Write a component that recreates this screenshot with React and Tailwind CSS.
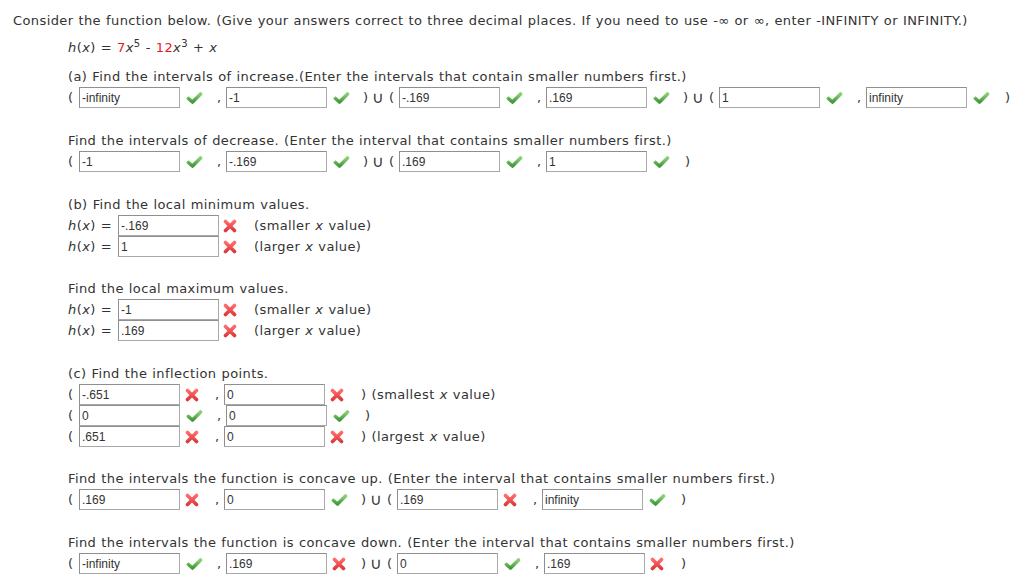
import React from "react";

const font = { fontFamily: '"DejaVu Sans", Verdana, sans-serif' };

function Box({ v, cls = "" }) {
    return (
        <div
            className={`w-[101px] h-[21px] shrink-0 border border-[#a9a9a9] border-t-[#8f8f8f] border-l-[#8f8f8f] bg-white pl-[2px] flex items-center text-[12px] text-[#333] tracking-normal [word-spacing:0px] ${cls}`}
            style={{ fontFamily: '"Liberation Sans", Arial, sans-serif' }}
        >
            {v}
        </div>
    );
}

function Check() {
    return (
        <svg width="17" height="14" viewBox="0 0 17 14">
            <defs>
                <linearGradient id="gck" x1="0" y1="0" x2="0" y2="1">
                    <stop offset="0" stopColor="#8ed174" />
                    <stop offset="1" stopColor="#3f9a3a" />
                </linearGradient>
            </defs>
            <path d="M2.5 7.5 L6.5 11 L14.5 3" fill="none" stroke="url(#gck)" strokeWidth="3.6" strokeLinecap="round" strokeLinejoin="round" />
        </svg>
    );
}

function Cross() {
    return (
        <svg width="14" height="14" viewBox="0 0 14 14">
            <defs>
                <linearGradient id="gx" x1="0" y1="0" x2="0" y2="1">
                    <stop offset="0" stopColor="#ff6b6b" />
                    <stop offset="1" stopColor="#e0393c" />
                </linearGradient>
            </defs>
            <path d="M2.5 2.5 L11.5 11.5 M11.5 2.5 L2.5 11.5" fill="none" stroke="url(#gx)" strokeWidth="3.6" strokeLinecap="round" />
        </svg>
    );
}

// mark after an input: ok = green check, otherwise red cross
function Mark({ ok }) {
    return ok ? (
        <div className="w-[26px] shrink-0 pl-[6px] flex items-center"><Check /></div>
    ) : (
        <div className="w-[24px] shrink-0 pl-[5px] flex items-center"><Cross /></div>
    );
}

const Comma = () => <div className="w-[20px] shrink-0 pl-[11px]">,</div>;
const Union = () => (
    <div className="w-[46px] shrink-0 pl-[10px] flex items-center">
        <span>)</span>
        <span className="ml-[4px] text-[16px] leading-none font-light">∪</span>
        <span className="ml-[4px]">(</span>
    </div>
);
const Open = () => <div className="w-[11px] shrink-0">(</div>;
const Close = ({ children }) => <div className="pl-[12px] whitespace-pre">{children || ")"}</div>;

function Hx() {
    return (
        <span>
            <i>h</i>(<i>x</i>) =
        </span>
    );
}

function Label({ children, cls = "" }) {
    return <div className={`h-[21px] leading-[21px] whitespace-nowrap ${cls}`}>{children}</div>;
}

function Row({ children, cls = "" }) {
    return <div className={`h-[21px] flex items-center ${cls}`}>{children}</div>;
}

// interval pairs: [[a, okA], [b, okB]] ...
function Intervals({ items }) {
    return (
        <Row>
            <Open />
            {items.map((pair, i) => (
                <React.Fragment key={i}>
                    {i > 0 && <Union />}
                    <Box v={pair[0][0]} />
                    <Mark ok={pair[0][1]} />
                    <Comma />
                    <Box v={pair[1][0]} />
                    <Mark ok={pair[1][1]} />
                </React.Fragment>
            ))}
            <Close />
        </Row>
    );
}

function HRow({ v, note }) {
    return (
        <Row>
            <div className="w-[50px] shrink-0 whitespace-nowrap"><Hx /></div>
            <Box v={v} />
            <div className="w-[24px] shrink-0 pl-[4px] flex items-center"><Cross /></div>
            <div className="pl-[11px]">{note}</div>
        </Row>
    );
}

export default function App() {
    return (
        <div className="w-[1024px] h-[578px] bg-white text-[13px] text-[#333] tracking-[0.4px] [word-spacing:0.5px] overflow-hidden" style={font}>
            <div className="pt-[10px] pl-[13px]">
                <Label>
                    Consider the function below. (Give your answers correct to three decimal places. If you need to use -∞ or ∞, enter -INFINITY or INFINITY.)
                </Label>
            </div>

            <div className="pl-[68px]">
                <Label cls="mt-[6px]">
                    <Hx /> <span className="text-[#e8191d]">7</span><i>x</i>
                    <sup className="text-[10px]">5</sup> - <span className="text-[#e8191d]">12</span><i>x</i>
                    <sup className="text-[10px]">3</sup> + <i>x</i>
                </Label>

                <Label cls="mt-[8px]">(a) Find the intervals of increase.(Enter the intervals that contain smaller numbers first.)</Label>
                <Intervals
                    items={[
                        [["-infinity", true], ["-1", true]],
                        [["-.169", true], [".169", true]],
                        [["1", true], ["infinity", true]],
                    ]}
                />

                <Label cls="mt-[22px]">Find the intervals of decrease. (Enter the interval that contains smaller numbers first.)</Label>
                <Row>
                    <Open />
                    <Box v="-1" />
                    <Mark ok />
                    <Comma />
                    <Box v="-.169" />
                    <Mark ok />
                    <Union />
                    <Box v=".169" />
                    <Mark ok />
                    <Comma />
                    <Box v="1" />
                    <Mark ok />
                    <Close />
                </Row>

                <Label cls="mt-[22px]">(b) Find the local minimum values.</Label>
                <HRow v="-.169" note={<>(smaller <i>x</i> value)</>} />
                <HRow v="1" note={<>(larger <i>x</i> value)</>} />

                <Label cls="mt-[21px]">Find the local maximum values.</Label>
                <HRow v="-1" note={<>(smaller <i>x</i> value)</>} />
                <HRow v=".169" note={<>(larger <i>x</i> value)</>} />

                <Label cls="mt-[22px]">(c) Find the inflection points.</Label>
                <Row>
                    <Open />
                    <Box v="-.651" />
                    <Mark />
                    <Comma />
                    <Box v="0" />
                    <Mark />
                    <Close>) (smallest <i>x</i> value)</Close>
                </Row>
                <Row>
                    <Open />
                    <Box v="0" />
                    <Mark ok />
                    <Comma />
                    <Box v="0" />
                    <Mark ok />
                    <Close />
                </Row>
                <Row>
                    <Open />
                    <Box v=".651" />
                    <Mark />
                    <Comma />
                    <Box v="0" />
                    <Mark />
                    <Close>) (largest <i>x</i> value)</Close>
                </Row>

                <Label cls="mt-[21px]">Find the intervals the function is concave up. (Enter the interval that contains smaller numbers first.)</Label>
                <Intervals
                    items={[
                        [[".169", false], ["0", true]],
                        [[".169", false], ["infinity", true]],
                    ]}
                />

                <Label cls="mt-[22px]">Find the intervals the function is concave down. (Enter the interval that contains smaller numbers first.)</Label>
                <Intervals
                    items={[
                        [["-infinity", true], [".169", false]],
                        [["0", true], [".169", false]],
                    ]}
                />
            </div>
        </div>
    );
}
